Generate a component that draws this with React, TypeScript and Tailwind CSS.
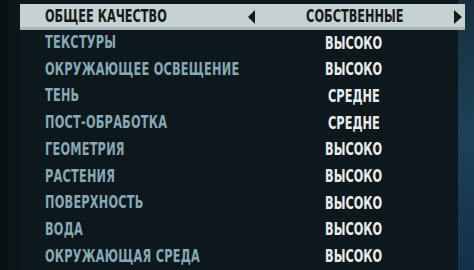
const ROWS: { label: string; value: string }[] = [
  { label: "ТЕКСТУРЫ", value: "ВЫСОКО" },
  { label: "ОКРУЖАЮЩЕЕ ОСВЕЩЕНИЕ", value: "ВЫСОКО" },
  { label: "ТЕНЬ", value: "СРЕДНЕ" },
  { label: "ПОСТ-ОБРАБОТКА", value: "СРЕДНЕ" },
  { label: "ГЕОМЕТРИЯ", value: "ВЫСОКО" },
  { label: "РАСТЕНИЯ", value: "ВЫСОКО" },
  { label: "ПОВЕРХНОСТЬ", value: "ВЫСОКО" },
  { label: "ВОДА", value: "ВЫСОКО" },
  { label: "ОКРУЖАЮЩАЯ СРЕДА", value: "ВЫСОКО" },
];

const font = "font-['DejaVu_Sans_Condensed','DejaVu_Sans',sans-serif] [font-stretch:condensed] font-bold";

export default function App() {
  return (
    <div className="flex h-[270px] w-[474px] overflow-hidden bg-[#0d181d]">
      {/* Left shade */}
      <div className="w-[20px] shrink-0 bg-gradient-to-r from-[#080f12] to-[#0d181d]" />

      {/* Settings list */}
      <div className={`relative flex w-[438px] shrink-0 flex-col pt-[4px] ${font}`}>
        {/* Selected row */}
        <div className="relative z-10 flex h-[26px] w-[445px] items-center bg-[#c6d1d1] shadow-[inset_0_-3px_0_#a9b6b8]">
          <div className="w-[228px] pl-[25px] whitespace-nowrap">
            <span className="inline-block origin-left scale-x-[0.74] text-[17px] leading-none text-[#141a1c]">
              ОБЩЕЕ КАЧЕСТВО
            </span>
          </div>
          <div className="flex flex-1 items-center">
            <span className="h-0 w-0 border-y-[7px] border-r-[7px] border-y-transparent border-r-[#141a1c]" />
            <span className="flex flex-1 justify-center whitespace-nowrap">
              <span className="inline-block scale-x-[0.74] text-[17px] leading-none text-[#141a1c]">
                СОБСТВЕННЫЕ
              </span>
            </span>
            <span className="mr-[3px] h-0 w-0 border-y-[7px] border-l-[8px] border-y-transparent border-l-[#141a1c]" />
          </div>
        </div>

        {ROWS.map((r) => (
          <div key={r.label} className="flex h-[27px] items-center whitespace-nowrap">
            <div className="w-[253px] pl-[25px]">
              <span className="inline-block origin-left scale-x-[0.74] text-[17px] leading-none tracking-[0.3px] text-[#87a8b4]">
                {r.label}
              </span>
            </div>
            <div className="flex w-[162px] justify-center">
              <span className="inline-block scale-x-[0.74] text-[17px] leading-none text-[#e8ebec]">
                {r.value}
              </span>
            </div>
          </div>
        ))}
      </div>

      {/* Right blue edge */}
      <div className="flex-1 bg-gradient-to-b from-[#16303f] via-[#1c4258] to-[#133047]" />
    </div>
  );
}
